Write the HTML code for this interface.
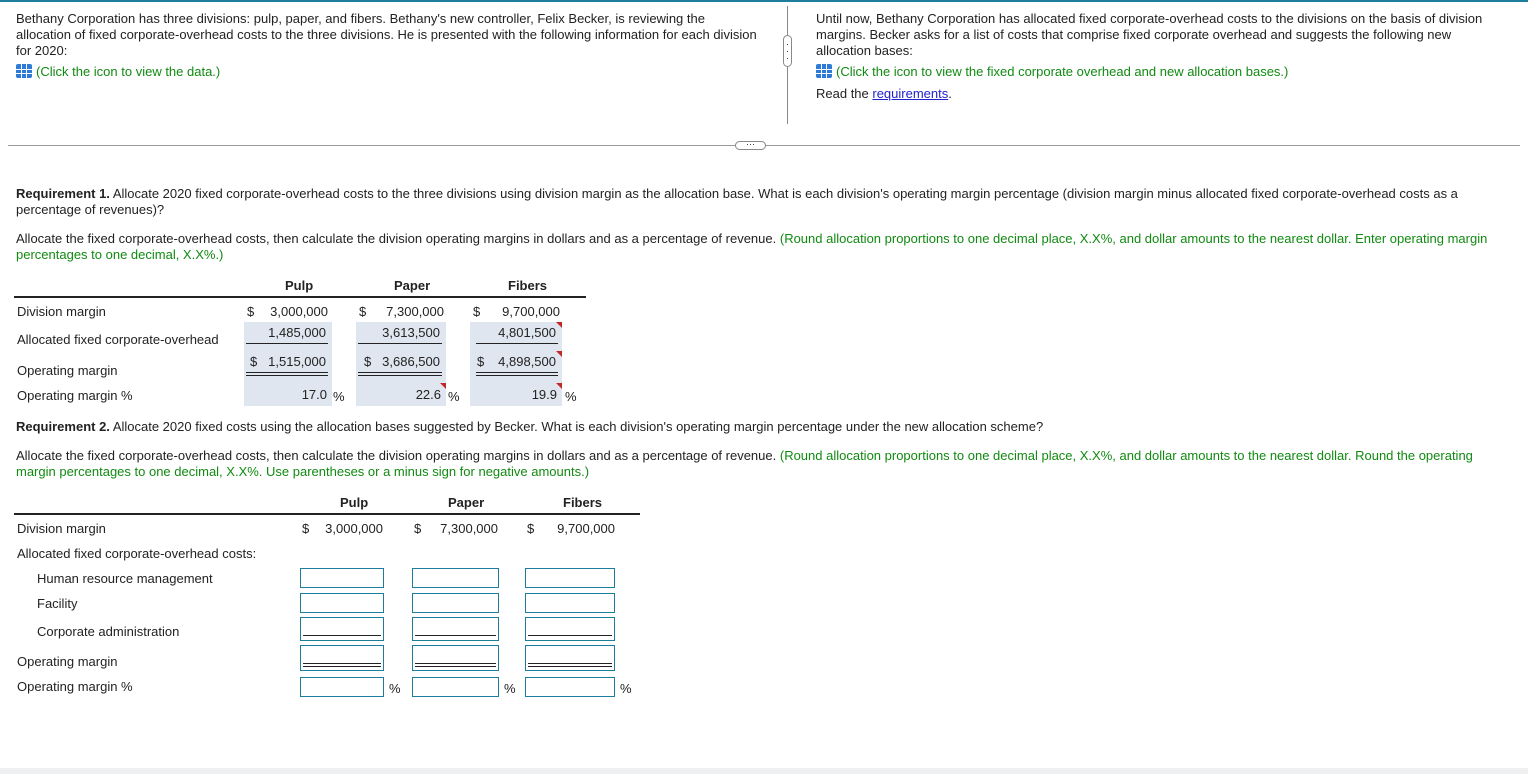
<!DOCTYPE html>
<html><head><meta charset="utf-8"><style>
*{margin:0;padding:0;box-sizing:border-box}
body{width:1528px;height:774px;position:relative;background:#fff;font-family:"Liberation Sans",Arial,sans-serif;font-size:13px;color:#222;overflow:hidden}
.a{position:absolute;white-space:nowrap;line-height:16px}
.g{color:#118a11}
.b{font-weight:bold}
.ic{display:inline-block;width:16px;height:14px;background:#2f7bd8;border-radius:2px;vertical-align:-2px;margin-right:4px;position:relative;
background-image:linear-gradient(#fff,#fff),linear-gradient(#fff,#fff),linear-gradient(#fff,#fff),linear-gradient(#fff,#fff);
background-size:1px 100%,1px 100%,100% 1px,100% 1px;background-position:5px 0,10px 0,0 5px,0 9px;background-repeat:no-repeat}
.sh{position:absolute;background:#dfe6f0}
.r{text-align:right}
.box{position:absolute;border:1px solid #1d7d9c;background:#fff}
.ul{position:absolute;height:1px;background:#222}
.tri{position:absolute;width:0;height:0;border-top:6px solid #c0282a;border-left:6px solid transparent}
</style></head><body>
<div style="position:absolute;left:0;top:0;width:1528px;height:2px;background:#1d7d9c"></div>
<div class="a" style="left:16px;top:11px;white-space:normal;width:742px">Bethany Corporation has three divisions: pulp, paper, and fibers. Bethany's new controller, Felix Becker, is reviewing the allocation of fixed corporate-overhead costs to the three divisions. He is presented with the following information for each division for 2020:</div>
<div class="a g" style="left:16px;top:64px"><span class="ic"></span>(Click the icon to view the data.)</div>
<div style="position:absolute;left:787px;top:6px;width:1px;height:118px;background:#888"></div>
<div style="position:absolute;left:783px;top:35px;width:9px;height:32px;border:1px solid #888;border-radius:5px;background:#fff;font-size:9px;text-align:center;line-height:7px;padding-top:5px">·<br>·<br>·</div>
<div class="a" style="left:816px;top:11px;white-space:normal;width:680px">Until now, Bethany Corporation has allocated fixed corporate-overhead costs to the divisions on the basis of division margins. Becker asks for a list of costs that comprise fixed corporate overhead and suggests the following new allocation bases:</div>
<div class="a g" style="left:816px;top:64px"><span class="ic"></span>(Click the icon to view the fixed corporate overhead and new allocation bases.)</div>
<div class="a" style="left:816px;top:86px">Read the <span style="color:#2222cc;text-decoration:underline">requirements</span>.</div>
<div style="position:absolute;left:8px;top:145px;width:1512px;height:1px;background:#999"></div>
<div style="position:absolute;left:735px;top:141px;width:31px;height:9px;border:1px solid #888;border-radius:5px;background:#fff;font-size:9px;line-height:4px;text-align:center">···</div>

<div class="a" style="left:16px;top:186px;white-space:normal;width:1470px"><span class="b">Requirement 1.</span> Allocate 2020 fixed corporate-overhead costs to the three divisions using division margin as the allocation base. What is each division's operating margin percentage (division margin minus allocated fixed corporate-overhead costs as a percentage of revenues)?</div>
<div class="a" style="left:16px;top:231px;white-space:normal;width:1490px">Allocate the fixed corporate-overhead costs, then calculate the division operating margins in dollars and as a percentage of revenue. <span class="g">(Round allocation proportions to one decimal place, X.X%, and dollar amounts to the nearest dollar. Enter operating margin percentages to one decimal, X.X%.)</span></div>

<div class="a b" style="left:285px;top:278px">Pulp</div>
<div class="a b" style="left:394px;top:278px">Paper</div>
<div class="a b" style="left:508px;top:278px">Fibers</div>
<div style="position:absolute;left:14px;top:296px;width:572px;height:2px;background:#222"></div>
<div class="sh" style="left:244px;top:322px;width:88px;height:84px"></div>
<div class="sh" style="left:356px;top:322px;width:90px;height:84px"></div>
<div class="sh" style="left:470px;top:322px;width:92px;height:84px"></div>
<div class="a" style="left:17px;top:304px">Division margin</div>
<div class="a" style="left:17px;top:332px">Allocated fixed corporate-overhead</div>
<div class="a" style="left:17px;top:363px">Operating margin</div>
<div class="a" style="left:17px;top:388px">Operating margin %</div>
<div class="a" style="left:247px;top:304px">$</div><div class="a r" style="left:250px;top:304px;width:78px">3,000,000</div>
<div class="a" style="left:359px;top:304px">$</div><div class="a r" style="left:362px;top:304px;width:82px">7,300,000</div>
<div class="a" style="left:473px;top:304px">$</div><div class="a r" style="left:476px;top:304px;width:84px">9,700,000</div>
<div class="a r" style="left:250px;top:325px;width:76px">1,485,000</div>
<div class="a r" style="left:362px;top:325px;width:78px">3,613,500</div>
<div class="a r" style="left:476px;top:325px;width:80px">4,801,500</div>
<div class="ul" style="left:246px;top:343px;width:82px"></div>
<div class="ul" style="left:358px;top:343px;width:84px"></div>
<div class="ul" style="left:476px;top:343px;width:82px"></div>
<div class="a" style="left:250px;top:354px">$</div><div class="a r" style="left:250px;top:354px;width:76px">1,515,000</div>
<div class="a" style="left:364px;top:354px">$</div><div class="a r" style="left:362px;top:354px;width:78px">3,686,500</div>
<div class="a" style="left:477px;top:354px">$</div><div class="a r" style="left:476px;top:354px;width:80px">4,898,500</div>
<div class="ul" style="left:246px;top:372px;width:82px"></div><div class="ul" style="left:246px;top:375px;width:82px"></div>
<div class="ul" style="left:358px;top:372px;width:84px"></div><div class="ul" style="left:358px;top:375px;width:84px"></div>
<div class="ul" style="left:476px;top:372px;width:82px"></div><div class="ul" style="left:476px;top:375px;width:82px"></div>
<div class="tri" style="left:556px;top:322px"></div><div class="tri" style="left:556px;top:351px"></div>
<div class="tri" style="left:440px;top:383px"></div><div class="tri" style="left:556px;top:383px"></div>
<div class="a r" style="left:250px;top:387px;width:77px">17.0</div><div class="a" style="left:333px;top:389px">%</div>
<div class="a r" style="left:362px;top:387px;width:79px">22.6</div><div class="a" style="left:448px;top:389px">%</div>
<div class="a r" style="left:476px;top:387px;width:81px">19.9</div><div class="a" style="left:565px;top:389px">%</div>

<div class="a" style="left:16px;top:419px"><span class="b">Requirement 2.</span> Allocate 2020 fixed costs using the allocation bases suggested by Becker. What is each division's operating margin percentage under the new allocation scheme?</div>
<div class="a" style="left:16px;top:448px;white-space:normal;width:1480px">Allocate the fixed corporate-overhead costs, then calculate the division operating margins in dollars and as a percentage of revenue. <span class="g">(Round allocation proportions to one decimal place, X.X%, and dollar amounts to the nearest dollar. Round the operating margin percentages to one decimal, X.X%. Use parentheses or a minus sign for negative amounts.)</span></div>

<div class="a b" style="left:340px;top:495px">Pulp</div>
<div class="a b" style="left:448px;top:495px">Paper</div>
<div class="a b" style="left:563px;top:495px">Fibers</div>
<div style="position:absolute;left:14px;top:513px;width:626px;height:2px;background:#222"></div>
<div class="a" style="left:17px;top:521px">Division margin</div>
<div class="a" style="left:17px;top:546px">Allocated fixed corporate-overhead costs:</div>
<div class="a" style="left:37px;top:571px">Human resource management</div>
<div class="a" style="left:37px;top:596px">Facility</div>
<div class="a" style="left:37px;top:624px">Corporate administration</div>
<div class="a" style="left:17px;top:654px">Operating margin</div>
<div class="a" style="left:17px;top:679px">Operating margin %</div>
<div class="a" style="left:302px;top:521px">$</div><div class="a r" style="left:320px;top:521px;width:63px">3,000,000</div>
<div class="a" style="left:414px;top:521px">$</div><div class="a r" style="left:430px;top:521px;width:68px">7,300,000</div>
<div class="a" style="left:527px;top:521px">$</div><div class="a r" style="left:545px;top:521px;width:70px">9,700,000</div>

<div class="box" style="left:300px;top:568px;width:84px;height:20px"></div>
<div class="box" style="left:412px;top:568px;width:87px;height:20px"></div>
<div class="box" style="left:525px;top:568px;width:90px;height:20px"></div>
<div class="box" style="left:300px;top:593px;width:84px;height:20px"></div>
<div class="box" style="left:412px;top:593px;width:87px;height:20px"></div>
<div class="box" style="left:525px;top:593px;width:90px;height:20px"></div>
<div class="box" style="left:300px;top:617px;width:84px;height:24px"></div>
<div class="box" style="left:412px;top:617px;width:87px;height:24px"></div>
<div class="box" style="left:525px;top:617px;width:90px;height:24px"></div>
<div class="ul" style="left:303px;top:635px;width:78px"></div>
<div class="ul" style="left:415px;top:635px;width:81px"></div>
<div class="ul" style="left:528px;top:635px;width:84px"></div>
<div class="box" style="left:300px;top:645px;width:84px;height:26px"></div>
<div class="box" style="left:412px;top:645px;width:87px;height:26px"></div>
<div class="box" style="left:525px;top:645px;width:90px;height:26px"></div>
<div class="ul" style="left:303px;top:663px;width:78px"></div><div class="ul" style="left:303px;top:666px;width:78px"></div>
<div class="ul" style="left:415px;top:663px;width:81px"></div><div class="ul" style="left:415px;top:666px;width:81px"></div>
<div class="ul" style="left:528px;top:663px;width:84px"></div><div class="ul" style="left:528px;top:666px;width:84px"></div>
<div class="box" style="left:300px;top:677px;width:84px;height:20px"></div>
<div class="box" style="left:412px;top:677px;width:87px;height:20px"></div>
<div class="box" style="left:525px;top:677px;width:90px;height:20px"></div>
<div class="a" style="left:389px;top:681px">%</div>
<div class="a" style="left:504px;top:681px">%</div>
<div class="a" style="left:620px;top:681px">%</div>
<div style="position:absolute;left:0;top:768px;width:1528px;height:6px;background:#eef0f2"></div>
</body></html>
